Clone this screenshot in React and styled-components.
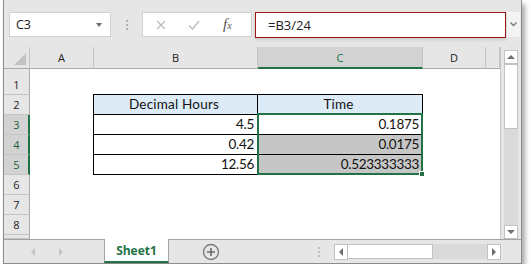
import React from "react";
import styled, { createGlobalStyle } from "styled-components";

const GREEN = "#217346";
const CHROME = "#e6e6e6";

const Global = createGlobalStyle`
  html, body { margin: 0; padding: 0; background: #fff; }
  body { font-family: "Open Sans", "Noto Sans", sans-serif; }
  * { box-sizing: border-box; }
`;

const Window = styled.div`
  margin-left: 3px;
  width: 519px;
  height: 264px;
  background: ${CHROME};
  border: 1px solid #8c8c8c;
  border-top: none;
  box-shadow: 3px 4px 5px rgba(0, 0, 0, 0.35);
  display: flex;
  flex-direction: column;
`;

/* ---------- formula bar ---------- */
const FormulaBar = styled.div`
  height: 47px;
  display: flex;
  align-items: flex-start;
  padding: 12px 0 0 5px;
`;

const NameBox = styled.div`
  width: 102px;
  height: 25px;
  background: #fff;
  border: 1px solid #d2d2d2;
  display: flex;
  align-items: center;
  justify-content: space-between;
  padding: 0 8px 0 6px;
  font-size: 12.5px;
  color: #222;
`;

const Caret = styled.span`
  width: 0;
  height: 0;
  border-left: 3.5px solid transparent;
  border-right: 3.5px solid transparent;
  border-top: 4px solid #6d6d6d;
`;

const Grip = styled.div`
  width: 31px;
  height: 25px;
  display: flex;
  flex-direction: column;
  align-items: center;
  justify-content: center;
  gap: 2px;
  span {
    width: 2px;
    height: 2px;
    background: #b0b0b0;
  }
`;

const FxBox = styled.div`
  width: 110px;
  height: 25px;
  background: #fff;
  border: 1px solid #d2d2d2;
  display: flex;
  align-items: center;
  padding-left: 13px;
  gap: 22px;
`;

const Fx = styled.span`
  font-family: "Liberation Serif", "DejaVu Serif", serif;
  font-style: italic;
  font-size: 15px;
  color: #555;
  margin-left: 1px;
  sub {
    font-size: 10px;
    vertical-align: 0;
  }
`;

const FormulaInput = styled.div`
  margin-left: 3px;
  width: 251px;
  height: 26px;
  background: #fff;
  border: 1px solid #a31515;
  box-shadow: 0 2px 3px rgba(0, 0, 0, 0.12);
  display: flex;
  align-items: center;
  padding-left: 12px;
  font-size: 13px;
  color: #222;
`;

const ExpandBox = styled.div`
  width: 13px;
  height: 25px;
  margin-left: 1px;
  background: #f4f4f4;
  display: flex;
  align-items: center;
  justify-content: center;
`;

/* ---------- sheet ---------- */
const Body = styled.div`
  height: 192px;
  display: flex;
`;

const Sheet = styled.div`
  width: 497px;
  background: #fff;
  border-right: 1px solid #c6c6c6;
  display: grid;
  grid-template-columns: 26px 64px 164px 165px 63px 1fr;
  grid-template-rows: 22px 26px repeat(7, 20px) 1fr;
  overflow: hidden;
`;

const HeaderCell = styled.div`
  background: ${(p) => (p.$active ? "#d2d2d2" : CHROME)};
  border-right: 1px solid #c4c4c4;
  border-bottom: ${(p) => (p.$active ? `2px solid ${GREEN}` : "1px solid #ababab")};
  display: flex;
  align-items: center;
  justify-content: center;
  font-size: 11px;
  color: ${(p) => (p.$active ? GREEN : "#222")};
  padding-top: ${(p) => (p.$active ? "1px" : "0")};
`;

const Corner = styled(HeaderCell)`
  align-items: flex-end;
  justify-content: flex-end;
  padding: 0 3px 3px 0;
`;

const RowHeader = styled.div`
  grid-column: 1;
  background: ${(p) => (p.$active ? "#d2d2d2" : CHROME)};
  border-right: ${(p) => (p.$active ? `2px solid ${GREEN}` : "1px solid #ababab")};
  border-bottom: 1px solid #c4c4c4;
  display: flex;
  align-items: flex-end;
  justify-content: center;
  padding-bottom: 1px;
  padding-left: ${(p) => (p.$active ? "1px" : "0")};
  font-size: 11px;
  line-height: 16px;
  color: ${(p) => (p.$active ? "#1d5e3a" : "#222")};
`;

const DataTable = styled.div`
  grid-column: 3 / 5;
  grid-row: 3 / 7;
  margin: -1px 0 0 -1px;
  position: relative;
  display: grid;
  grid-template-columns: 164px 165px;
  grid-template-rows: repeat(4, 20px);
  border-top: 1px solid #000;
  border-left: 1px solid #000;
  font-family: Lato, "Open Sans", sans-serif;
  font-size: 13.5px;
  color: #111;
`;

const Cell = styled.div`
  border-right: 1px solid #000;
  border-bottom: 1px solid #000;
  background: ${(p) => p.$fill || "#fff"};
  display: flex;
  align-items: flex-end;
  justify-content: ${(p) => (p.$center ? "center" : "flex-end")};
  padding: 0 3px 1px 0;
  line-height: 17px;
  letter-spacing: ${(p) => (p.$center ? "0.2px" : "-0.3px")};
`;

const Selection = styled.div`
  position: absolute;
  left: 163px;
  top: 18px;
  width: 166px;
  height: 62px;
  border: 2px solid ${GREEN};
  pointer-events: none;
`;

const FillHandle = styled.div`
  position: absolute;
  right: -4px;
  bottom: -4px;
  width: 6px;
  height: 6px;
  background: ${GREEN};
  border: 1px solid #fff;
`;

const VScroll = styled.div`
  width: 20px;
  display: flex;
  flex-direction: column;
  padding: 3px 0 0 3px;
`;

const ScrollBtn = styled.div`
  width: 14px;
  height: ${(p) => p.$h || 14}px;
  background: #fff;
  border: 1px solid #c2c2c2;
  display: flex;
  align-items: center;
  justify-content: center;
  flex-shrink: 0;
`;

const VTrack = styled.div`
  width: 14px;
  flex: 1;
  background: #dadada;
`;

const Tri = styled.span`
  width: 0;
  height: 0;
  ${(p) =>
    p.$dir === "up"
      ? `border-left:4px solid transparent;border-right:4px solid transparent;border-bottom:4px solid ${p.$c || "#6f6f6f"};`
      : p.$dir === "down"
      ? `border-left:4px solid transparent;border-right:4px solid transparent;border-top:4px solid ${p.$c || "#6f6f6f"};`
      : p.$dir === "left"
      ? `border-top:4px solid transparent;border-bottom:4px solid transparent;border-right:4px solid ${p.$c || "#6f6f6f"};`
      : `border-top:4px solid transparent;border-bottom:4px solid transparent;border-left:4px solid ${p.$c || "#6f6f6f"};`}
`;

/* ---------- tab bar ---------- */
const TabBar = styled.div`
  flex: 1;
  display: flex;
  align-items: stretch;
  border-top: 1px solid #a3a3a3;
`;

const TabNav = styled.div`
  width: 100px;
  display: flex;
  align-items: center;
  padding-left: 27px;
  gap: 24px;
`;

const SheetTab = styled.div`
  width: 65px;
  margin-top: -1px;
  background: #fff;
  border-left: 1px solid #a3a3a3;
  border-right: 1px solid #a3a3a3;
  border-bottom: 2px solid ${GREEN};
  display: flex;
  align-items: center;
  justify-content: center;
  font-size: 12px;
  font-weight: 700;
  color: ${GREEN};
`;

const AddSheet = styled.div`
  margin-left: 33px;
  display: flex;
  align-items: center;
  padding-top: 1px;
`;

const TabGrip = styled(Grip)`
  width: 4px;
  height: auto;
  margin-left: 97px;
  span {
    background: #bdbdbd;
  }
`;

const HScroll = styled.div`
  margin-left: 13px;
  display: flex;
  align-items: center;
`;

const HThumb = styled.div`
  width: 85px;
  height: 15px;
  background: #fff;
  border: 1px solid #c2c2c2;
  border-left: none;
`;

const HTrack = styled.div`
  width: 54px;
  height: 15px;
  background: #dadada;
`;

const cols = ["A", "B", "C", "D", ""];
const rows = [1, 2, 3, 4, 5, 6, 7, 8, 9];
const data = [
  ["4.5", "0.1875"],
  ["0.42", "0.0175"],
  ["12.56", "0.523333333"],
];

export default function App() {
  return (
    <>
      <Global />
      <Window>
        <FormulaBar>
          <NameBox>
            C3
            <Caret />
          </NameBox>
          <Grip>
            <span />
            <span />
            <span />
          </Grip>
          <FxBox>
            <svg width="10" height="10" viewBox="0 0 10 10">
              <path d="M1 1L9 9M9 1L1 9" stroke="#bdbdbd" strokeWidth="1.3" fill="none" />
            </svg>
            <svg width="12" height="10" viewBox="0 0 12 10">
              <path d="M1 5.5L4.5 9L11 1" stroke="#bdbdbd" strokeWidth="1.4" fill="none" />
            </svg>
            <Fx>
              f<sub>x</sub>
            </Fx>
          </FxBox>
          <FormulaInput>=B3/24</FormulaInput>
          <ExpandBox>
            <svg width="7" height="5" viewBox="0 0 7 5">
              <path d="M0.5 0.5L3.5 3.5L6.5 0.5" stroke="#7a7a7a" strokeWidth="1.4" fill="none" />
            </svg>
          </ExpandBox>
        </FormulaBar>

        <Body>
          <Sheet>
            <Corner>
              <svg width="12" height="12" viewBox="0 0 12 12">
                <path d="M12 0L12 12L0 12Z" fill="#c3c3c3" />
              </svg>
            </Corner>
            {cols.map((c, i) => (
              <HeaderCell key={i} $active={c === "C"}>
                {c}
              </HeaderCell>
            ))}
            {rows.map((r) => (
              <RowHeader key={r} $active={r >= 3 && r <= 5} style={{ gridRow: r + 1 }}>
                {r < 9 ? r : ""}
              </RowHeader>
            ))}
            <DataTable>
              <Cell $center $fill="#ddebf7">Decimal Hours</Cell>
              <Cell $center $fill="#ddebf7">Time</Cell>
              {data.map(([b, c], i) => (
                <React.Fragment key={i}>
                  <Cell>{b}</Cell>
                  <Cell $fill={i > 0 ? "#c6c6c6" : undefined}>{c}</Cell>
                </React.Fragment>
              ))}
              <Selection>
                <FillHandle />
              </Selection>
            </DataTable>
          </Sheet>
          <VScroll>
            <ScrollBtn>
              <Tri $dir="up" />
            </ScrollBtn>
            <ScrollBtn $h={65} />
            <VTrack />
            <ScrollBtn>
              <Tri $dir="down" />
            </ScrollBtn>
          </VScroll>
        </Body>

        <TabBar>
          <TabNav>
            <Tri $dir="left" $c="#c4c4c4" />
            <Tri $dir="right" $c="#c4c4c4" />
          </TabNav>
          <SheetTab>Sheet1</SheetTab>
          <AddSheet>
            <svg width="18" height="18" viewBox="0 0 18 18">
              <circle cx="9" cy="9" r="7.5" stroke="#7a7a7a" strokeWidth="1.3" fill="none" />
              <path d="M9 5V13M5 9H13" stroke="#6a6a6a" strokeWidth="1.6" />
            </svg>
          </AddSheet>
          <TabGrip>
            <span />
            <span />
            <span />
          </TabGrip>
          <HScroll>
            <ScrollBtn $h={16}>
              <Tri $dir="left" />
            </ScrollBtn>
            <HThumb />
            <HTrack />
            <ScrollBtn $h={16}>
              <Tri $dir="right" />
            </ScrollBtn>
          </HScroll>
        </TabBar>
      </Window>
    </>
  );
}
